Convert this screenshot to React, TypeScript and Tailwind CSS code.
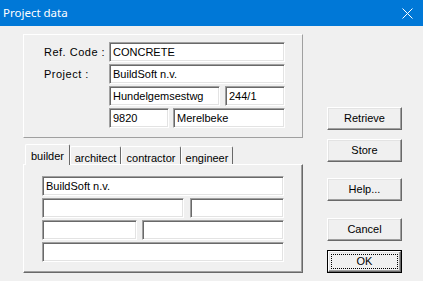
const FIELD =
  "h-[20px] bg-white border border-t-[#a0a0a0] border-l-[#a0a0a0] border-r-white border-b-white shadow-[inset_1px_1px_0_#696969,inset_-1px_-1px_0_#e3e3e3] flex items-center pl-[3px] pt-[1px] whitespace-nowrap overflow-hidden";

function Field({ w, text }: { w: number | string; text?: string }) {
  return (
    <div className={FIELD} style={{ width: w }}>
      {text}
    </div>
  );
}

function Btn({ label, def = false, className = '' }: { label: string; def?: boolean; className?: string }) {
  return (
    <div
      className={`h-[23px] w-[75px] ${def ? 'border border-black' : ''} ${className}`}
    >
      <div className="h-full w-full border border-t-white border-l-white border-r-[#696969] border-b-[#696969] shadow-[inset_-1px_-1px_0_#a0a0a0,inset_1px_1px_0_#e3e3e3] bg-[#f0f0f0] flex items-center justify-center p-[2px]">
        <div
          className={`h-full w-full flex items-center justify-center ${def ? 'border border-dotted border-black' : ''}`}
        >
          {label}
        </div>
      </div>
    </div>
  );
}

const TABS = [
  { label: 'builder', w: 45 },
  { label: 'architect', w: 51 },
  { label: 'contractor', w: 60 },
  { label: 'engineer', w: 52 },
];

export default function App() {
  return (
    <div className="w-[423px] h-[281px] bg-[#f0f0f0] overflow-hidden flex flex-col text-[11px] text-black font-[family-name:'Liberation_Sans',Arial,sans-serif]">
      <div className="h-[26px] shrink-0 bg-[#0078d7] flex items-center justify-between pl-[3px] pr-[10px] text-white">
        <span className="text-[11.5px] font-[family-name:'Noto_Sans',sans-serif]">Project data</span>
        <svg width="11" height="11" viewBox="0 0 11 11">
          <path d="M0.5 0.5L10.5 10.5M10.5 0.5L0.5 10.5" stroke="white" strokeWidth="1" />
        </svg>
      </div>

      <div className="flex pl-[23px] pt-[8px]">
        <div className="w-[280px] flex flex-col">
          {/* project group */}
          <div className="h-[104px] border border-t-white border-l-white border-r-[#a0a0a0] border-b-[#a0a0a0] pt-[7px] pl-[20px] flex flex-col gap-[2px]">
            <div className="flex items-center">
              <span className="w-[65px] tracking-[0.5px]">Ref. Code :</span>
              <Field w={176} text="CONCRETE" />
            </div>
            <div className="flex items-center">
              <span className="w-[65px] tracking-[0.5px]">Project :</span>
              <Field w={176} text="BuildSoft n.v." />
            </div>
            <div className="flex items-center gap-[5px] pl-[65px]">
              <Field w={111} text="Hundelgemsestwg" />
              <Field w={60} text="244/1" />
            </div>
            <div className="flex items-center gap-[4px] pl-[65px]">
              <Field w={60} text="9820" />
              <Field w={112} text="Merelbeke" />
            </div>
          </div>

          {/* tabs */}
          <div className="mt-[6px] h-[20px] flex items-end pl-[2px]">
            {TABS.map((t, i) =>
              i === 0 ? (
                <div
                  key={t.label}
                  className="relative z-10 -mb-px h-[21px] bg-[#f0f0f0] border-t border-l border-r border-t-white border-l-white border-r-[#696969] rounded-t-[2px] flex items-start justify-center pt-[3px]"
                  style={{ width: t.w }}
                >
                  {t.label}
                </div>
              ) : (
                <div
                  key={t.label}
                  className="h-[18px] border-t border-l border-r border-t-white border-l-white border-r-[#696969] rounded-t-[2px] flex items-start justify-center pt-[3px]"
                  style={{ width: t.w }}
                >
                  {t.label}
                </div>
              )
            )}
          </div>
          <div className="h-[109px] border border-t-white border-l-white border-r-[#696969] border-b-[#696969] shadow-[inset_-1px_-1px_0_#a0a0a0] pt-[11px] pl-[18px] flex flex-col gap-[2px]">
            <Field w={242} text="BuildSoft n.v." />
            <div className="flex gap-[6px]">
              <Field w={142} />
              <Field w={94} />
            </div>
            <div className="flex gap-[5px]">
              <Field w={95} />
              <Field w={142} />
            </div>
            <Field w={242} />
          </div>
        </div>

        <div className="ml-[24px] w-[75px] flex flex-col pt-[73px]">
          <Btn label="Retrieve" />
          <Btn label="Store" className="mt-[9px]" />
          <Btn label="Help..." className="mt-[16px]" />
          <Btn label="Cancel" className="mt-[17px]" />
          <Btn label="OK" def className="mt-[9px]" />
        </div>
      </div>
    </div>
  );
}
